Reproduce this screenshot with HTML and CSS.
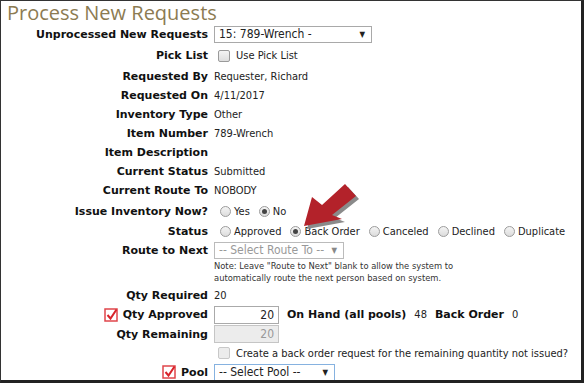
FILE: index.html
```html
<!DOCTYPE html>
<html lang="en">
<head>
    <meta charset="UTF-8">
    <title>Process New Requests</title>
    <link rel="stylesheet" href="styles.css">
</head>
<body>

    <div class="frame">
        <h1 class="title">Process New Requests</h1>

        <div class="row row-first">
            <div class="label">Unprocessed New Requests</div>
            <div class="value">
                <div class="select select-request">15: 789-Wrench -<span class="caret">&#9660;</span></div>
            </div>
        </div>

        <div class="row row-pick">
            <div class="label">Pick List</div>
            <div class="value">
                <span class="box"></span><span class="opt">Use Pick List</span>
            </div>
        </div>

        <div class="row row-tall">
            <div class="label">Requested By</div>
            <div class="value">Requester, Richard</div>
        </div>
        <div class="row">
            <div class="label">Requested On</div>
            <div class="value">4/11/2017</div>
        </div>
        <div class="row">
            <div class="label">Inventory Type</div>
            <div class="value">Other</div>
        </div>
        <div class="row">
            <div class="label">Item Number</div>
            <div class="value">789-Wrench</div>
        </div>
        <div class="row">
            <div class="label">Item Description</div>
            <div class="value"></div>
        </div>
        <div class="row">
            <div class="label">Current Status</div>
            <div class="value">Submitted</div>
        </div>
        <div class="row">
            <div class="label">Current Route To</div>
            <div class="value">NOBODY</div>
        </div>

        <div class="row row-issue">
            <div class="label">Issue Inventory Now?</div>
            <div class="value">
                <span class="radio"></span><span class="opt">Yes</span>
                <span class="radio checked"></span><span class="opt">No</span>
            </div>
        </div>

        <div class="row">
            <div class="label">Status</div>
            <div class="value">
                <span class="radio"></span><span class="opt">Approved</span>
                <span class="radio checked"></span><span class="opt">Back Order</span>
                <span class="radio"></span><span class="opt">Canceled</span>
                <span class="radio"></span><span class="opt">Declined</span>
                <span class="radio"></span><span class="opt">Duplicate</span>
            </div>
        </div>

        <div class="row row-route">
            <div class="label">Route to Next</div>
            <div class="value">
                <div class="select select-route">-- Select Route To --<span class="caret">&#9660;</span></div>
            </div>
        </div>
        <div class="note">
            Note: Leave "Route to Next" blank to allow the system to<br>
            automatically route the next person based on system.
        </div>

        <div class="row row-tall">
            <div class="label">Qty Required</div>
            <div class="value">20</div>
        </div>

        <div class="row">
            <div class="label">
                <svg class="req" width="14" height="14" viewBox="0 0 14 14">
                    <rect x="1" y="1" width="12" height="12" fill="#fff" stroke="#e0464b" stroke-width="1.5"/>
                    <path d="M3.5 7 L6.5 10.5 L12.5 1.5" fill="none" stroke="#d8232a" stroke-width="2"/>
                </svg>Qty Approved
            </div>
            <div class="value">
                <div class="field">20</div>
                <span class="inline-label">On Hand (all pools)</span><span class="inline-val">48</span>
                <span class="inline-label">Back Order</span><span class="inline-val">0</span>
            </div>
        </div>

        <div class="row row-tall">
            <div class="label">Qty Remaining</div>
            <div class="value">
                <div class="field disabled">20</div>
            </div>
        </div>

        <div class="row row-create">
            <div class="label"></div>
            <div class="value">
                <span class="box disabled"></span><span class="opt">Create a back order request for the remaining quantity not issued?</span>
            </div>
        </div>

        <div class="row row-tall">
            <div class="label">
                <svg class="req" width="14" height="14" viewBox="0 0 14 14">
                    <rect x="1" y="1" width="12" height="12" fill="#fff" stroke="#e0464b" stroke-width="1.5"/>
                    <path d="M3.5 7 L6.5 10.5 L12.5 1.5" fill="none" stroke="#d8232a" stroke-width="2"/>
                </svg>Pool
            </div>
            <div class="value">
                <div class="select select-pool">-- Select Pool --<span class="caret">&#9660;</span></div>
            </div>
        </div>

        <svg class="pointer" width="70" height="50" viewBox="0 0 70 50">
            <polygon points="7,45 15,16 25,24 48,3 59,15 35,34 45,38" fill="#8a8a8a" transform="translate(3,3)"/>
            <polygon points="7,45 15,16 25,24 48,3 59,15 35,34 45,38" fill="#b3222a"/>
        </svg>
    </div>

</body>
</html>
```

FILE: styles.css
```css
* {
    box-sizing: border-box;
}

body {
    margin: 0;
    background: #fff;
}

.frame {
    position: relative;
    width: 584px;
    height: 383px;
    border: 1px solid #333;
    border-right: 3px solid #222;
    border-bottom: 3px solid #222;
    font-family: "DejaVu Sans Condensed", "DejaVu Sans", sans-serif;
    font-size: 11px;
    color: #222;
    overflow: hidden;
}

.title {
    margin: 0;
    height: 23px;
    padding-left: 6px;
    font-family: "Open Sans", sans-serif;
    font-weight: normal;
    font-size: 20px;
    line-height: 23px;
    color: #8c7b52;
}

.row {
    display: flex;
    align-items: center;
    height: 19px;
}

.row-first {
    height: 21px;
}

.row-pick {
    height: 21px;
}

.row-tall {
    height: 20px;
}

.row-issue {
    height: 22px;
}

.row-route {
    height: 18px;
}

.row-create {
    height: 18px;
}

.label {
    width: 207px;
    flex-shrink: 0;
    text-align: right;
    font-family: "DejaVu Sans", sans-serif;
    font-weight: bold;
    font-size: 11px;
    color: #111;
    display: flex;
    justify-content: flex-end;
    align-items: center;
}

.value {
    margin-left: 6px;
    display: flex;
    align-items: center;
    white-space: nowrap;
}

.req {
    margin-right: 5px;
}

.select {
    position: relative;
    height: 17px;
    line-height: 15px;
    padding-left: 4px;
    border: 1px solid #a9a9a9;
    font-size: 12px;
    background: #fff;
}

.select .caret {
    position: absolute;
    right: 6px;
    top: 0;
    font-size: 8px;
    color: #222;
}

.select-request {
    width: 158px;
}

.select-route {
    width: 130px;
    color: #999;
    border-color: #bbb;
}

.select-route .caret {
    color: #888;
}

.select-pool {
    width: 121px;
    border-color: #86b2e0;
}

.box {
    display: inline-block;
    width: 12px;
    height: 12px;
    margin: 0 6px 0 4px;
    border: 1px solid #9a9a9a;
    border-radius: 2px;
    background: linear-gradient(#f4f4f4, #dedede);
}

.box.disabled {
    border-color: #c8c8c8;
    background: #ececec;
}

.radio {
    display: inline-block;
    position: relative;
    width: 11px;
    height: 11px;
    margin: 0 3px 0 6px;
    border: 1px solid #9c9c9c;
    border-radius: 50%;
    background: linear-gradient(#f4f4f4, #dcdcdc);
}

.radio.checked::after {
    content: "";
    position: absolute;
    left: 2px;
    top: 2px;
    width: 5px;
    height: 5px;
    border-radius: 50%;
    background: #444;
}

.opt {
    font-size: 11px;
    margin-right: 3px;
}

.note {
    margin-left: 213px;
    font-size: 9.3px;
    line-height: 12px;
    padding-top: 1px;
    color: #333;
    height: 26px;
}

.field {
    width: 65px;
    height: 18px;
    line-height: 16px;
    padding-right: 4px;
    border: 1px solid #aaa;
    text-align: right;
    font-size: 12px;
}

.field.disabled {
    background: #ececec;
    color: #999;
    border-color: #c5c5c5;
}

.inline-label {
    margin-left: 8px;
    font-family: "DejaVu Sans", sans-serif;
    font-weight: bold;
    font-size: 11px;
    color: #111;
}

.inline-val {
    margin-left: 8px;
}

.pointer {
    position: absolute;
    left: 296px;
    top: 180px;
}
```
